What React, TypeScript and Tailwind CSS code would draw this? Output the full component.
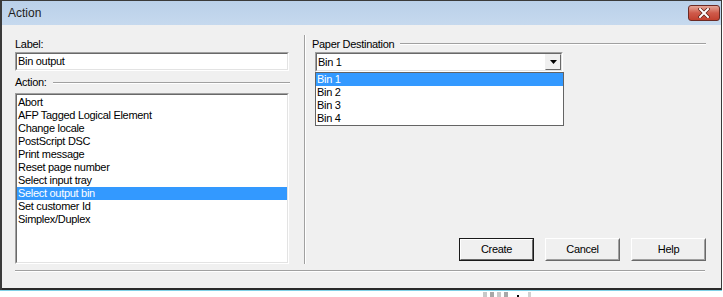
import React from "react";

const actions = [
  "Abort",
  "AFP Tagged Logical Element",
  "Change locale",
  "PostScript DSC",
  "Print message",
  "Reset page number",
  "Select input tray",
  "Select output bin",
  "Set customer Id",
  "Simplex/Duplex",
];

const bins = ["Bin 1", "Bin 2", "Bin 3", "Bin 4"];

function Sunken({ className, children }: { className: string; children?: React.ReactNode }) {
  return (
    <div className={`border border-t-[#a0a0a0] border-l-[#a0a0a0] border-b-white border-r-white ${className}`}>
      <div className="h-full border border-t-[#696969] border-l-[#696969] border-b-[#e3e3e3] border-r-[#e3e3e3] bg-white overflow-hidden">
        {children}
      </div>
    </div>
  );
}

function Button({ label, isDefault }: { label: string; isDefault?: boolean }) {
  return (
    <button
      type="button"
      className={`w-[75px] h-[23px] border ${isDefault ? "border-[#1a1a1a]" : "border-t-white border-l-white border-b-[#696969] border-r-[#696969]"}`}
    >
      <div
        className={`h-full flex items-center justify-center bg-[#f0f0f0] border ${
          isDefault
            ? "border-t-white border-l-white border-b-[#696969] border-r-[#696969]"
            : "border-t-[#f0f0f0] border-l-[#f0f0f0] border-b-[#a0a0a0] border-r-[#a0a0a0]"
        }`}
      >
        {label}
      </div>
    </button>
  );
}

export default function App() {
  return (
    <div className="w-[723px] h-[297px] bg-white overflow-hidden relative text-[11px] leading-[13px] text-black font-['Liberation_Sans',Arial,sans-serif] tracking-[-0.3px]">
      {/* Window */}
      <div className="w-[722px] h-[290px] flex flex-col border-t border-l-2 border-r border-[#3a3a3a]">
        {/* Title bar */}
        <div className="h-[24px] flex items-start justify-between pl-[6px] pr-[1px] bg-gradient-to-b from-[#bad0e9] to-[#c6d9ee]">
          <span className="text-[12px] leading-[24px] tracking-normal text-[#1e1e1e]">Action</span>
          <div className="mt-[4px] w-[32px] h-[16px] rounded-[3px] border border-[#6b2a24] bg-gradient-to-b from-[#e4a597] via-[#cf5a4a] to-[#c2412f] flex items-center justify-center">
            <svg width="12" height="10" viewBox="0 0 12 10">
              <path d="M2 1 L10 9 M10 1 L2 9" stroke="#5a1d14" strokeWidth="3.4" strokeLinecap="square" />
              <path d="M2 1 L10 9 M10 1 L2 9" stroke="#ffffff" strokeWidth="2" strokeLinecap="square" />
            </svg>
          </div>
        </div>

        {/* Body */}
        <div className="flex-1 bg-[#f0f0f0] flex flex-col pt-[10px] pl-[13px]">
          <div className="flex h-[229px]">
            {/* Left column */}
            <div className="w-[275px] flex flex-col pt-[2px]">
              <div className="h-[14px] leading-[14px]">Label:</div>
              <Sunken className="mt-px h-[19px] w-[274px]">
                <div className="pl-[1px] leading-[15px]">Bin output</div>
              </Sunken>
              <div className="mt-[5px] h-[13px] flex items-center">
                <span>Action:</span>
                <div className="flex-1 ml-[6px] mt-px border-t border-[#a0a0a0] border-b border-b-white" />
              </div>
              <Sunken className="mt-[4px] h-[171px] w-[274px]">
                <div className="pt-px">
                  {actions.map((a) => (
                    <div
                      key={a}
                      className={`h-[13px] pl-px ${a === "Select output bin" ? "bg-[#3399ff] text-white" : ""}`}
                    >
                      {a}
                    </div>
                  ))}
                </div>
              </Sunken>
            </div>

            {/* Separator */}
            <div className="ml-[14px] w-[2px] flex">
              <div className="w-px bg-[#a0a0a0]" />
              <div className="w-px bg-white" />
            </div>

            {/* Right column */}
            <div className="ml-[6px] w-[394px] flex flex-col pt-[2px]">
              <div className="h-[14px] leading-[14px] flex items-center">
                <span>Paper Destination</span>
                <div className="flex-1 ml-[6px] border-t border-[#a0a0a0] border-b border-b-white" />
              </div>
              <div className="pl-[3px] mt-px relative">
                <Sunken className="h-[20px] w-[248px]">
                  <div className="flex h-full">
                    <div className="flex-1 pl-px leading-[16px]">Bin 1</div>
                    <div className="w-[16px] h-[16px] border border-t-[#f0f0f0] border-l-[#f0f0f0] border-b-[#696969] border-r-[#696969] bg-[#f0f0f0] flex items-center justify-center">
                      <svg width="7" height="4" viewBox="0 0 7 4">
                        <path d="M0 0 H7 L3.5 4 Z" fill="#000" />
                      </svg>
                    </div>
                  </div>
                </Sunken>
                {/* Open drop-down list */}
                <div className="absolute left-[3px] top-[20px] w-[249px] border border-[#646464] bg-white">
                  {bins.map((b) => (
                    <div key={b} className={`h-[13px] pl-px ${b === "Bin 1" ? "bg-[#3399ff] text-white" : ""}`}>
                      {b}
                    </div>
                  ))}
                </div>
              </div>
              <div className="mt-auto mb-[3px] flex justify-end gap-[11px]">
                <Button label="Create" isDefault />
                <Button label="Cancel" />
                <Button label="Help" />
              </div>
            </div>
          </div>
          <div className="mt-[6px] w-[690px] border-t border-[#a0a0a0] border-b border-b-white" />
        </div>
        <div className="h-[2px] bg-[#2a2a2a]" />
      </div>
      <div className="h-px bg-[#7fd0e6] w-[722px]" />
      {/* fragment of another window below */}
      <div className="flex ml-[483px] mt-px gap-[3px] h-[6px]">
        <div className="w-[4px] bg-[#c8c8c8]" />
        <div className="w-[4px] bg-[#a8a8a8]" />
        <div className="w-[4px] bg-[#c8c8c8]" />
        <div className="w-[4px] bg-[#a8a8a8]" />
        <div className="w-[2px] h-[3px] mt-[3px] ml-[6px] bg-black" />
        <div className="w-[3px] ml-[6px] bg-[#d0d0d0]" />
      </div>
    </div>
  );
}
